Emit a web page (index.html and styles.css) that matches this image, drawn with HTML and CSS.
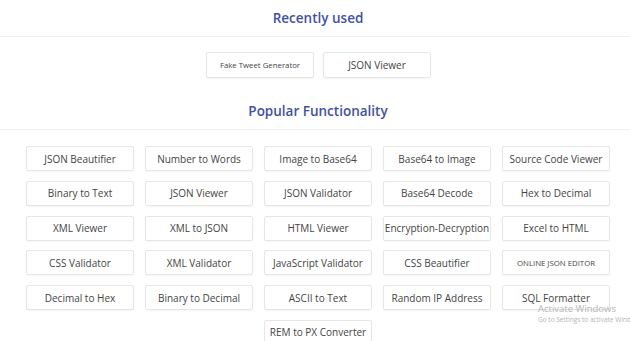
FILE: index.html
```html
<!DOCTYPE html>
<html lang="en">
<head>
    <meta charset="UTF-8">
    <meta name="viewport" content="width=device-width, initial-scale=1.0">
    <title>Tools</title>
    <link rel="stylesheet" href="styles.css">
</head>
<body>
    <section class="block">
        <h2 class="block-title">Recently used</h2>
        <div class="recent">
            <a class="tool small" href="#">Fake Tweet Generator</a>
            <a class="tool" href="#">JSON Viewer</a>
        </div>
    </section>

    <section class="block">
        <h2 class="block-title">Popular Functionality</h2>
        <div class="grid">
            <a class="tool" href="#">JSON Beautifier</a>
            <a class="tool" href="#">Number to Words</a>
            <a class="tool" href="#">Image to Base64</a>
            <a class="tool" href="#">Base64 to Image</a>
            <a class="tool" href="#">Source Code Viewer</a>
            <a class="tool" href="#">Binary to Text</a>
            <a class="tool" href="#">JSON Viewer</a>
            <a class="tool" href="#">JSON Validator</a>
            <a class="tool" href="#">Base64 Decode</a>
            <a class="tool" href="#">Hex to Decimal</a>
            <a class="tool" href="#">XML Viewer</a>
            <a class="tool" href="#">XML to JSON</a>
            <a class="tool" href="#">HTML Viewer</a>
            <a class="tool" href="#">Encryption-Decryption</a>
            <a class="tool" href="#">Excel to HTML</a>
            <a class="tool" href="#">CSS Validator</a>
            <a class="tool" href="#">XML Validator</a>
            <a class="tool" href="#">JavaScript Validator</a>
            <a class="tool" href="#">CSS Beautifier</a>
            <a class="tool small" href="#">ONLINE JSON EDITOR</a>
            <a class="tool" href="#">Decimal to Hex</a>
            <a class="tool" href="#">Binary to Decimal</a>
            <a class="tool" href="#">ASCII to Text</a>
            <a class="tool" href="#">Random IP Address</a>
            <a class="tool" href="#">SQL Formatter</a>
            <span></span>
            <span></span>
            <a class="tool" href="#">REM to PX Converter</a>
        </div>
    </section>

    <div class="watermark">
        <p class="wm-title">Activate Windows</p>
        <p class="wm-sub">Go to Settings to activate Windows.</p>
    </div>
</body>
</html>
```

FILE: styles.css
```css
body {
    font-family: "Open Sans", "Noto Sans", sans-serif;
    margin: 0;
    padding: 0;
    background-color: #fff;
    color: #444;
    overflow: hidden;
}
.block-title {
    margin: 0;
    padding: 9px 0 8px 6px;
    text-align: center;
    font-size: 13.5px;
    line-height: 19px;
    font-weight: 600;
    color: #3f51a5;
    border-bottom: 1px solid #f0f0f0;
}
.recent {
    display: flex;
    justify-content: center;
    gap: 9px;
    padding: 15px 0 0 7px;
    height: 41px;
}
.grid {
    display: grid;
    grid-template-columns: repeat(5, 108px);
    grid-auto-rows: 25px;
    gap: 9.8px 11px;
    justify-content: center;
    padding: 16px 0 0 6px;
}
.tool {
    display: flex;
    align-items: center;
    justify-content: center;
    box-sizing: border-box;
    width: 108px;
    height: 25px;
    border: 1px solid #e6e6e6;
    border-radius: 2px;
    box-shadow: 0 1px 2px rgba(0, 0, 0, 0.04);
    color: #444;
    text-decoration: none;
    font-size: 10px;
    white-space: nowrap;
}
.recent .tool {
    height: 26px;
}
.tool.small {
    font-size: 7.8px;
}
.watermark {
    position: absolute;
    left: 538px;
    top: 303px;
    color: #b5b5b5;
    white-space: nowrap;
}
.watermark p {
    margin: 0;
}
.wm-title {
    font-size: 9.5px;
    line-height: 12px;
}
.wm-sub {
    font-size: 6.5px;
    line-height: 10px;
    margin-left: -1px;
}
```
